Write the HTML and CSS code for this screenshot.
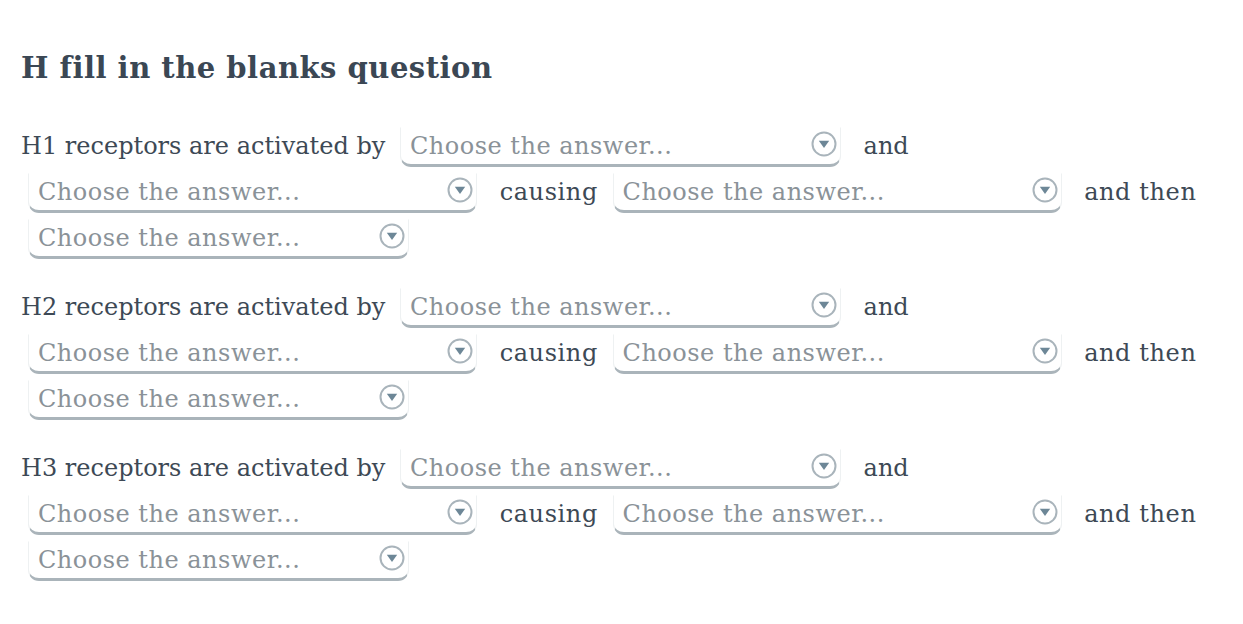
FILE: index.html
```html
<!DOCTYPE html>
<html lang="en">
<head>
<meta charset="utf-8">
<title>H fill in the blanks question</title>
<link rel="stylesheet" href="styles.css">
</head>
<body>
<div class="question">
  <h2 class="title">H fill in the blanks question</h2>

  <p class="row">H1 receptors are activated by <span class="dd w1"><span class="ph">Choose the answer...</span><svg class="ico" viewBox="0 0 26 26"><circle cx="13" cy="13" r="11.5"/><path d="M7.8 9.8h10.4L13 17z"/></svg></span> and <span class="dd w2"><span class="ph">Choose the answer...</span><svg class="ico" viewBox="0 0 26 26"><circle cx="13" cy="13" r="11.5"/><path d="M7.8 9.8h10.4L13 17z"/></svg></span> <span class="word">causing</span> <span class="dd w2"><span class="ph">Choose the answer...</span><svg class="ico" viewBox="0 0 26 26"><circle cx="13" cy="13" r="11.5"/><path d="M7.8 9.8h10.4L13 17z"/></svg></span> <span class="word">and then</span> <span class="dd w3"><span class="ph">Choose the answer...</span><svg class="ico" viewBox="0 0 26 26"><circle cx="13" cy="13" r="11.5"/><path d="M7.8 9.8h10.4L13 17z"/></svg></span></p>

  <p class="row">H2 receptors are activated by <span class="dd w1"><span class="ph">Choose the answer...</span><svg class="ico" viewBox="0 0 26 26"><circle cx="13" cy="13" r="11.5"/><path d="M7.8 9.8h10.4L13 17z"/></svg></span> and <span class="dd w2"><span class="ph">Choose the answer...</span><svg class="ico" viewBox="0 0 26 26"><circle cx="13" cy="13" r="11.5"/><path d="M7.8 9.8h10.4L13 17z"/></svg></span> <span class="word">causing</span> <span class="dd w2"><span class="ph">Choose the answer...</span><svg class="ico" viewBox="0 0 26 26"><circle cx="13" cy="13" r="11.5"/><path d="M7.8 9.8h10.4L13 17z"/></svg></span> <span class="word">and then</span> <span class="dd w3"><span class="ph">Choose the answer...</span><svg class="ico" viewBox="0 0 26 26"><circle cx="13" cy="13" r="11.5"/><path d="M7.8 9.8h10.4L13 17z"/></svg></span></p>

  <p class="row">H3 receptors are activated by <span class="dd w1"><span class="ph">Choose the answer...</span><svg class="ico" viewBox="0 0 26 26"><circle cx="13" cy="13" r="11.5"/><path d="M7.8 9.8h10.4L13 17z"/></svg></span> and <span class="dd w2"><span class="ph">Choose the answer...</span><svg class="ico" viewBox="0 0 26 26"><circle cx="13" cy="13" r="11.5"/><path d="M7.8 9.8h10.4L13 17z"/></svg></span> <span class="word">causing</span> <span class="dd w2"><span class="ph">Choose the answer...</span><svg class="ico" viewBox="0 0 26 26"><circle cx="13" cy="13" r="11.5"/><path d="M7.8 9.8h10.4L13 17z"/></svg></span> <span class="word">and then</span> <span class="dd w3"><span class="ph">Choose the answer...</span><svg class="ico" viewBox="0 0 26 26"><circle cx="13" cy="13" r="11.5"/><path d="M7.8 9.8h10.4L13 17z"/></svg></span></p>
</div>
</body>
</html>
```

FILE: styles.css
```css
html, body {
  margin: 0;
  padding: 0;
  background: #ffffff;
}

body {
  font-family: "DejaVu Serif", "Liberation Serif", serif;
  color: #3d4955;
}

.question {
  padding: 48px 21px 0 21px;
  width: 1210px;
}

.title {
  margin: 0 0 35px 0;
  font-size: 29px;
  line-height: 40px;
  font-weight: bold;
  letter-spacing: 0.5px;
  color: #3b4754;
}

.row {
  margin: 0 0 23px 0;
  font-size: 24px;
  line-height: 46px;
}

.word {
  letter-spacing: 0.6px;
}

.dd {
  display: inline-flex;
  align-items: center;
  justify-content: space-between;
  box-sizing: border-box;
  margin: 0 15px 0 7px;
  padding: 0 3px 0 9px;
  border: 1px solid #eef1f2;
  border-top-color: transparent;
  border-bottom: 3px solid #aab4ba;
  border-radius: 0 0 11px 11px;
}

.w1 { width: 441px; }
.w2 { width: 449px; }
.w3 { width: 381px; }

.ph {
  color: #8a9298;
  white-space: nowrap;
  line-height: 36px;
  letter-spacing: 0.5px;
}

.ico {
  width: 26px;
  height: 26px;
  flex: none;
  margin-bottom: 4px;
}

.ico circle {
  fill: none;
  stroke: #a9b4bb;
  stroke-width: 2;
}

.ico path {
  fill: #6d8797;
}
```
